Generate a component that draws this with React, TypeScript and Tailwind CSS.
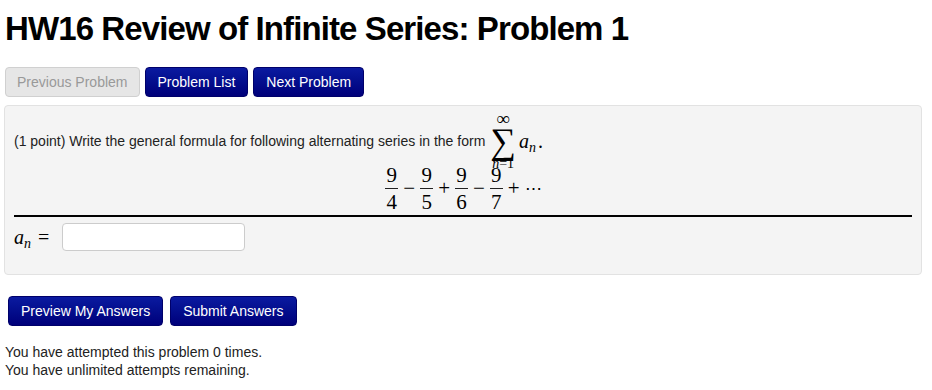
import React from 'react'

const sans = { fontFamily: '"Liberation Sans", Arial, sans-serif' }
const serif = { fontFamily: '"Liberation Serif", "DejaVu Serif", serif' }

function NavButton({ label, disabled }: { label: string; disabled?: boolean }) {
  if (disabled) {
    return (
      <button
        disabled
        className="h-[30px] px-[11px] rounded-[4px] border border-[#d0d0d0] bg-[#e6e6e6] text-[14px] text-[#999999]"
      >
        {label}
      </button>
    )
  }
  return (
    <button className="h-[30px] px-[12px] rounded-[4px] border border-[#00006a] bg-gradient-to-b from-[#0b1aa0] to-[#00007a] text-[14px] text-white">
      {label}
    </button>
  )
}

function Frac({ num, den }: { num: string; den: string }) {
  return (
    <span className="inline-flex flex-col items-center px-[1px]">
      <span className="leading-[22px]">{num}</span>
      <span className="w-[13px] h-[1px] bg-[#222] my-[2px]" />
      <span className="leading-[22px]">{den}</span>
    </span>
  )
}

function Op({ c }: { c: string }) {
  return <span className="px-[4px] leading-none">{c}</span>
}

export default function App() {
  return (
    <div className="w-[932px] h-[390px] bg-white text-black overflow-hidden px-[5px]" style={sans}>
      <h1 className="text-[33px] font-bold leading-none pt-[12px] tracking-[-0.9px]">
        HW16 Review of Infinite Series: Problem 1
      </h1>

      <div className="flex gap-[5px] mt-[22px]">
        <NavButton label="Previous Problem" disabled />
        <NavButton label="Problem List" />
        <NavButton label="Next Problem" />
      </div>

      <div className="mt-[8px] -ml-[1px] w-[918px] h-[170px] bg-[#f4f4f4] border border-[#e2e2e2] rounded-[4px] px-[9px]">
        <div className="flex items-center h-[68px] pt-[2px] text-[14px] text-[#222]">
          <span>(1 point) Write the general formula for following alternating series in the form</span>
          <span className="inline-flex flex-col items-center ml-[5px] text-black" style={serif}>
            <span className="h-[14px] flex items-center text-[19px] leading-none">∞</span>
            <span className="h-[32px] flex items-center text-[36px] leading-none">∑</span>
            <span className="h-[14px] flex items-center text-[14px] leading-none">
              <i>n</i>=1
            </span>
          </span>
          <span className="ml-[3px] text-[20px] text-black" style={serif}>
            <i>a</i>
            <sub className="text-[14px]">
              <i>n</i>
            </sub>
            <span className="ml-[2px]">.</span>
          </span>
        </div>

        <div className="flex items-center justify-center -mt-[11px] h-[51px] text-[21px] text-black" style={serif}>
          <Frac num="9" den="4" />
          <Op c="−" />
          <Frac num="9" den="5" />
          <Op c="+" />
          <Frac num="9" den="6" />
          <Op c="−" />
          <Frac num="9" den="7" />
          <Op c="+" />
          <span className="leading-none text-[17px] ml-[1px]">⋯</span>
        </div>

        <div className="h-[2px] bg-black mt-[1px]" />

        <div className="flex items-center h-[36px] mt-[2px]">
          <span className="text-[20px] text-black w-[48px]" style={serif}>
            <i>a</i>
            <sub className="text-[14px]">
              <i>n</i>
            </sub>
            <span className="ml-[7px]">=</span>
          </span>
          <input
            type="text"
            className="w-[183px] h-[28px] bg-white border border-[#cccccc] rounded-[4px] px-[6px] text-[14px]"
          />
        </div>
      </div>

      <div className="flex gap-[7px] mt-[21px] ml-[3px]">
        <NavButton label="Preview My Answers" />
        <NavButton label="Submit Answers" />
      </div>

      <div className="mt-[17px] text-[14px] leading-[18px] text-[#222]">
        <p>You have attempted this problem 0 times.</p>
        <p>You have unlimited attempts remaining.</p>
      </div>
    </div>
  )
}
